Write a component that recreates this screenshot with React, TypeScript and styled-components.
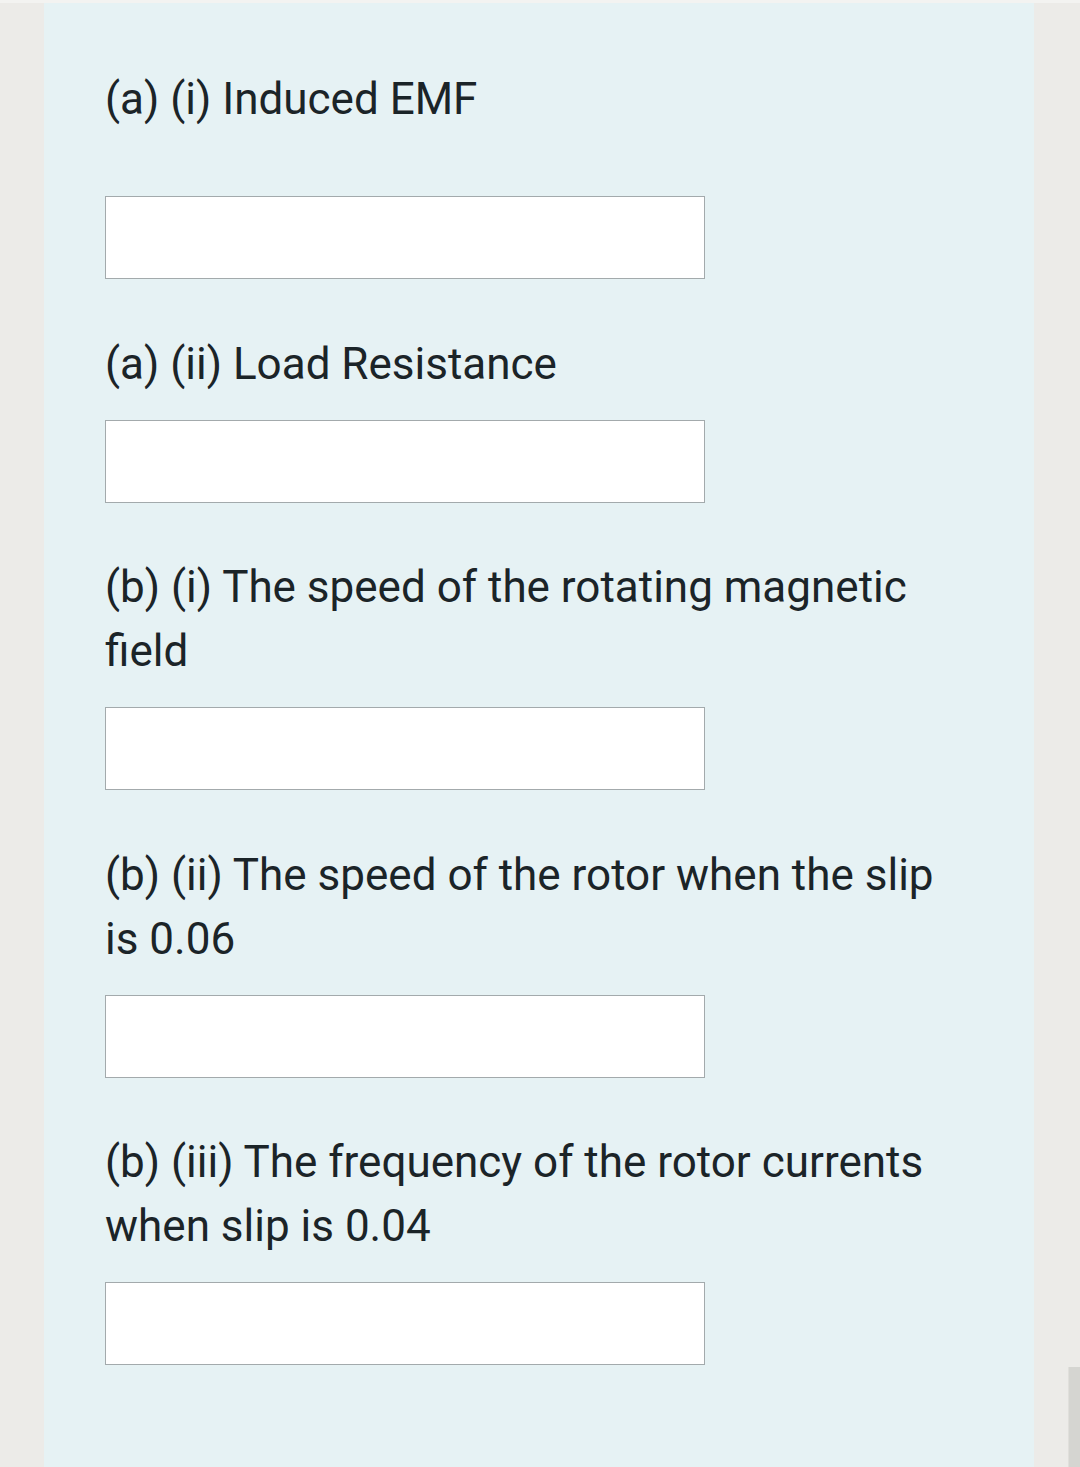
import React from 'react';
import styled, { createGlobalStyle } from 'styled-components';

const GlobalStyle = createGlobalStyle`
  html, body {
    margin: 0;
    padding: 0;
    background: #ecebe8;
  }
  * { box-sizing: border-box; }
`;

const Page = styled.div`
  position: relative;
  width: 1080px;
  height: 1467px;
  overflow: hidden;
  background: #ecebe8;
  border-top: 3px solid #f3f3f1;
  display: flex;
`;

const Panel = styled.div`
  margin-left: 44px;
  width: 990px;
  height: 100%;
  background: #e6f2f4;
  padding: 64px 0 0 61px;
  display: flex;
  flex-direction: column;
`;

const Question = styled.div<{ $first?: boolean }>`
  display: flex;
  flex-direction: column;
  gap: ${p => (p.$first ? 65 : 24)}px;
  margin-bottom: 52.5px;
`;

const Label = styled.div`
  font-family: Roboto, 'Noto Sans', sans-serif;
  font-size: 44px;
  line-height: 64px;
  color: #1b2428;
  max-width: 845px;
`;

const AnswerBox = styled.input`
  width: 600px;
  height: 83px;
  background: #ffffff;
  border: 1px solid #a3aaac;
  border-radius: 0;
  outline: none;
  padding: 0 16px;
  font-family: Roboto, sans-serif;
  font-size: 32px;
`;

const ScrollThumb = styled.div`
  position: absolute;
  right: 0;
  top: 1364px;
  width: 12px;
  height: 103px;
  background: #d5d5d1;
  border-left: 1px solid #e0dfdb;
`;

const questions = [
  '(a) (i) Induced EMF',
  '(a) (ii) Load Resistance',
  '(b) (i) The speed of the rotating magnetic field',
  '(b) (ii) The speed of the rotor when the slip is 0.06',
  '(b) (iii) The frequency of the rotor currents when slip is 0.04',
];

export default function App() {
  return (
    <>
      <GlobalStyle />
      <Page>
        <Panel>
          {questions.map((q, i) => (
            <Question key={i} $first={i === 0}>
              <Label>{q}</Label>
              <AnswerBox type="text" />
            </Question>
          ))}
        </Panel>
        <ScrollThumb />
      </Page>
    </>
  );
}
